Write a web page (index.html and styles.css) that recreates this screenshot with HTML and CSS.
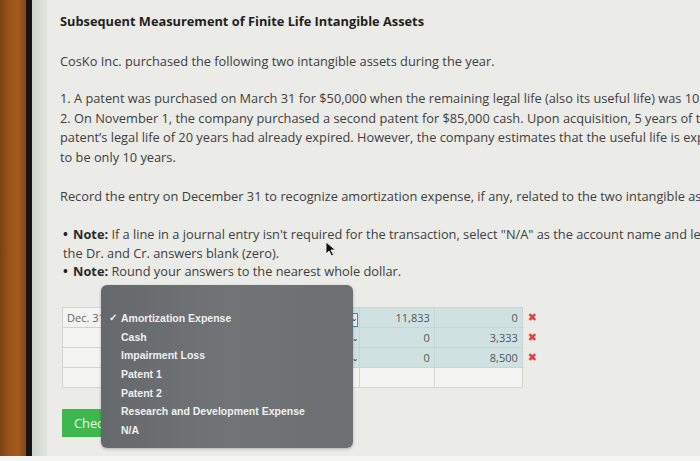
FILE: index.html
```html
<!DOCTYPE html>
<html>
<head>
<meta charset="utf-8">
<link rel="stylesheet" href="styles.css">
</head>
<body>
<div class="screen">
  <div class="wood"></div>
  <div class="bezel"></div>
  <div class="edge"></div>
  <main class="page">
    <h1 class="title">Subsequent Measurement of Finite Life Intangible Assets</h1>
    <p class="intro">CosKo Inc. purchased the following two intangible assets during the year.</p>
    <p class="problem">1. A patent was purchased on March 31 for $50,000 when the remaining legal life (also its useful life) was 10 years.<br>2. On November 1, the company purchased a second patent for $85,000 cash. Upon acquisition, 5 years of the<br>patent’s legal life of 20 years had already expired. However, the company estimates that the useful life is expected<br>to be only 10 years.</p>
    <p class="record">Record the entry on December 31 to recognize amortization expense, if any, related to the two intangible assets.</p>
    <ul class="notes">
      <li><b>Note:</b> If a line in a journal entry isn't required for the transaction, select "N/A" as the account name and leave<br>the Dr. and Cr. answers blank (zero).</li>
      <li><b>Note:</b> Round your answers to the nearest whole dollar.</li>
    </ul>
    <div class="journal">
      <table class="entry">
        <tr class="filled">
          <td class="date">Dec. 31</td>
          <td class="acct"><span class="sel focus">⌄</span></td>
          <td class="num">11,833</td>
          <td class="num cr">0</td>
        </tr>
        <tr class="filled">
          <td class="date"></td>
          <td class="acct"><span class="sel">⌄</span></td>
          <td class="num">0</td>
          <td class="num cr">3,333</td>
        </tr>
        <tr class="filled">
          <td class="date"></td>
          <td class="acct"><span class="sel">⌄</span></td>
          <td class="num">0</td>
          <td class="num cr">8,500</td>
        </tr>
        <tr>
          <td class="date"></td>
          <td class="acct"></td>
          <td class="num"></td>
          <td class="num cr"></td>
        </tr>
      </table>
      <div class="marks">
        <span class="wrong">✖</span>
        <span class="wrong">✖</span>
        <span class="wrong">✖</span>
      </div>
    </div>
    <button class="check">Check</button>

    <ul class="menu">
      <li class="chosen"><span class="tick">✓</span>Amortization Expense</li>
      <li>Cash</li>
      <li>Impairment Loss</li>
      <li>Patent 1</li>
      <li>Patent 2</li>
      <li>Research and Development Expense</li>
      <li>N/A</li>
    </ul>

    <svg class="cursor" width="12" height="16" viewBox="0 0 12 16">
      <path d="M1 1 L1 13 L4 10 L6.5 15 L8.5 14 L6 9 L10.5 9 Z" fill="#111" stroke="#fff" stroke-width="0.8"/>
    </svg>
  </main>
</div>
<div class="bottom"></div>
</body>
</html>
```

FILE: styles.css
```css
html, body {
  margin: 0;
  padding: 0;
  width: 700px;
  height: 461px;
  overflow: hidden;
  background: #e9e9e6;
}

.screen {
  display: flex;
  height: 456px;
}

.wood {
  width: 26px;
  flex: none;
  background: linear-gradient(90deg, #7a4114 0%, #9a5418 35%, #a35b1b 70%, #834615 100%);
}

.bezel {
  width: 6px;
  flex: none;
  background: #141414;
}

.edge {
  width: 15px;
  flex: none;
  background: linear-gradient(90deg, #cfd3ca, #e2e4de);
}

.page {
  position: relative;
  flex: 1;
  padding: 11px 0 0 13px;
  background: #ebebe8;
  font-family: "Open Sans", "DejaVu Sans", sans-serif;
  color: #404040;
  font-size: 12.8px;
  white-space: nowrap;
  overflow: hidden;
}

.title {
  margin: 0;
  font-size: 12.8px;
  line-height: 20px;
  font-weight: 700;
  color: #1f1f1f;
}

.intro {
  margin: 20px 0 0;
  line-height: 20px;
}

.problem {
  margin: 18px 0 0;
  line-height: 19.5px;
}

.record {
  margin: 19px 0 0;
  line-height: 20px;
}

.notes {
  list-style: none;
  margin: 19px 0 0;
  padding: 0 0 0 3px;
  line-height: 18.7px;
}

.notes li::before {
  content: "•";
  display: inline-block;
  width: 10px;
  font-weight: 700;
  color: #222;
}

.notes b {
  color: #2a2a2a;
}

.journal {
  display: flex;
  align-items: flex-start;
  margin: 26px 0 0 2px;
}

.entry {
  border-collapse: collapse;
  font-size: 11px;
  color: #555;
}

.entry td {
  height: 19px;
  padding: 0 4px;
  border: 1px solid #d3d3d0;
  background: #f3f3f1;
}

.entry .date {
  width: 30px;
  color: #666;
}

.entry .acct {
  width: 248px;
  text-align: right;
  padding: 0 1px 0 0;
}

.entry .num {
  width: 66px;
  text-align: right;
}

.entry .cr {
  width: 79px;
}

.entry .filled .acct,
.entry .filled .num {
  background: #cfe2e1;
  border-color: #c3d6d5;
}

.sel {
  display: inline-block;
  width: 6px;
  height: 12px;
  font-size: 8px;
  line-height: 8px;
  color: #222;
}

.sel.focus {
  border: 1px solid #4a7fc7;
  background: #e7eef6;
}

.marks {
  display: flex;
  flex-direction: column;
  padding: 2px 0 0 5px;
}

.wrong {
  height: 20px;
  font-size: 11px;
  line-height: 16px;
  color: #e0403e;
  font-weight: 700;
}

.check {
  display: block;
  margin: 21px 0 0 2px;
  width: 84px;
  height: 28px;
  padding: 0 0 0 12px;
  text-align: left;
  border: none;
  background: #3fb74f;
  color: #e9f8ea;
  font-family: "Open Sans", sans-serif;
  font-size: 12.8px;
}

.menu {
  position: absolute;
  left: 54px;
  top: 285px;
  width: 252px;
  height: 163px;
  box-sizing: border-box;
  margin: 0;
  padding: 24px 0 0 0;
  list-style: none;
  border-radius: 6px;
  background: linear-gradient(90deg, #65696c 0%, #707477 50%, #6c7073 100%);
  box-shadow: 0 1px 3px rgba(0,0,0,0.25);
  font-family: "Liberation Sans", Arial, sans-serif;
  font-weight: 700;
  font-size: 10.5px;
  color: #eef0f0;
}

.menu li {
  height: 18.7px;
  line-height: 18.7px;
  padding-left: 20px;
  position: relative;
}

.menu .tick {
  position: absolute;
  left: 8px;
  font-size: 10px;
}

.cursor {
  position: absolute;
  left: 278px;
  top: 241px;
}

.bottom {
  height: 5px;
  background: #f5f5f3;
}
```
